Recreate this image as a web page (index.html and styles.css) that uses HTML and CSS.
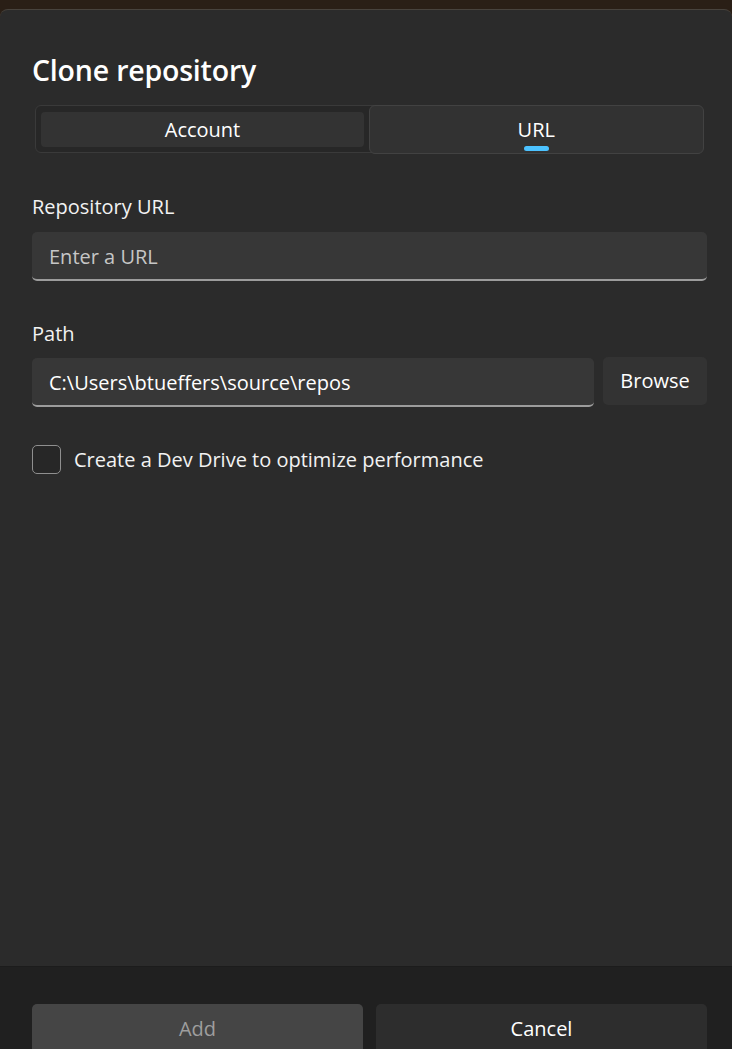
FILE: index.html
```html
<!DOCTYPE html>
<html>
<head>
<meta charset="utf-8">
<link rel="stylesheet" href="styles.css">
</head>
<body>
<div class="dialog">
  <div class="content">
    <h1 class="title">Clone repository</h1>
    <div class="segmented">
      <div class="seg seg-account">Account</div>
      <div class="seg seg-url">URL<span class="indicator"></span></div>
    </div>
    <div class="label label-first">Repository URL</div>
    <div class="input"><span class="placeholder">Enter a URL</span></div>
    <div class="label label-path">Path</div>
    <div class="path-row">
      <div class="input input-path"><span class="value">C:\Users\btueffers\source\repos</span></div>
      <div class="btn-browse">Browse</div>
    </div>
    <div class="check-row">
      <span class="checkbox"></span>
      <span class="check-label">Create a Dev Drive to optimize performance</span>
    </div>
  </div>
  <div class="footer">
    <div class="btn btn-add">Add</div>
    <div class="btn btn-cancel">Cancel</div>
  </div>
</div>
</body>
</html>
```

FILE: styles.css
```css
html, body {
  margin: 0;
  padding: 0;
  height: 100%;
  overflow: hidden;
}
body {
  background: #2a1f16;
  font-family: "Open Sans", "Noto Sans", sans-serif;
  color: #ffffff;
  font-size: 20px;
}
.dialog {
  margin-top: 9px;
  height: calc(100% - 9px);
  box-sizing: border-box;
  background: #2b2b2b;
  border-top: 1px solid #48433d;
  border-radius: 8px 8px 0 0;
  display: flex;
  flex-direction: column;
}
.content {
  flex: 1;
  padding: 0 25px 0 32px;
}
.title {
  margin: 43px 0 0 0;
  font-size: 28.5px;
  font-weight: 600;
  line-height: 34px;
  letter-spacing: -0.2px;
}
.segmented {
  margin: 18px 4px 0 3px;
  height: 48px;
  box-sizing: border-box;
  border: 1.5px solid #3a3a3a;
  border-radius: 6px;
  background: #272727;
  display: flex;
  align-items: stretch;
}
.seg {
  display: flex;
  align-items: center;
  justify-content: center;
  position: relative;
}
.seg-account {
  flex: 0 0 323px;
  margin: 6px 5px 5px 5px;
  background: #333333;
  border-radius: 4px;
}
.seg-url {
  flex: 1;
  margin: -1.5px -1.5px -1.5px 0;
  background: #323232;
  border: 1.5px solid #424242;
  border-radius: 6px;
}
.indicator {
  position: absolute;
  left: 50%;
  bottom: 2px;
  width: 25px;
  height: 5px;
  margin-left: -12px;
  border-radius: 3px;
  background: #4cc2ff;
}
.label {
  line-height: 28px;
  color: #f2f2f2;
}
.label-first {
  margin-top: 40px;
}
.label-path {
  margin-top: 39px;
}
.input {
  margin-top: 11px;
  height: 49px;
  box-sizing: border-box;
  background: #373737;
  border-radius: 5px;
  border-bottom: 2px solid #9c9c9c;
  display: flex;
  align-items: center;
  padding: 1px 16px 0 17px;
}
.placeholder {
  color: #c6c6c6;
}
.value {
  color: #ffffff;
}
.path-row {
  margin-top: 9px;
  display: flex;
  gap: 9px;
  align-items: flex-start;
}
.input-path {
  margin-top: 1px;
  flex: 1;
  height: 49px;
}
.btn-browse {
  width: 104px;
  height: 48px;
  box-sizing: border-box;
  background: #333333;
  border-radius: 5px;
  display: flex;
  align-items: center;
  justify-content: center;
  padding-bottom: 1px;
}
.check-row {
  margin-top: 38px;
  display: flex;
  align-items: center;
  gap: 13px;
}
.checkbox {
  width: 29px;
  height: 29px;
  flex: none;
  box-sizing: border-box;
  border: 1.5px solid #8f8f8f;
  border-radius: 5px;
  background: #272727;
}
.check-label {
  color: #f2f2f2;
}
.footer {
  height: 83px;
  flex: none;
  background: #202020;
  border-top: 1px solid #1c1c1c;
  padding: 37px 25px 0 32px;
  display: flex;
  gap: 13px;
  box-sizing: border-box;
}
.btn {
  flex: 1;
  height: 50px;
  border-radius: 5px;
  display: flex;
  align-items: center;
  justify-content: center;
  padding-bottom: 2px;
  box-sizing: border-box;
}
.btn-add {
  background: #454545;
  color: #9e9e9e;
}
.btn-cancel {
  background: #2d2d2d;
  color: #ffffff;
}
```
